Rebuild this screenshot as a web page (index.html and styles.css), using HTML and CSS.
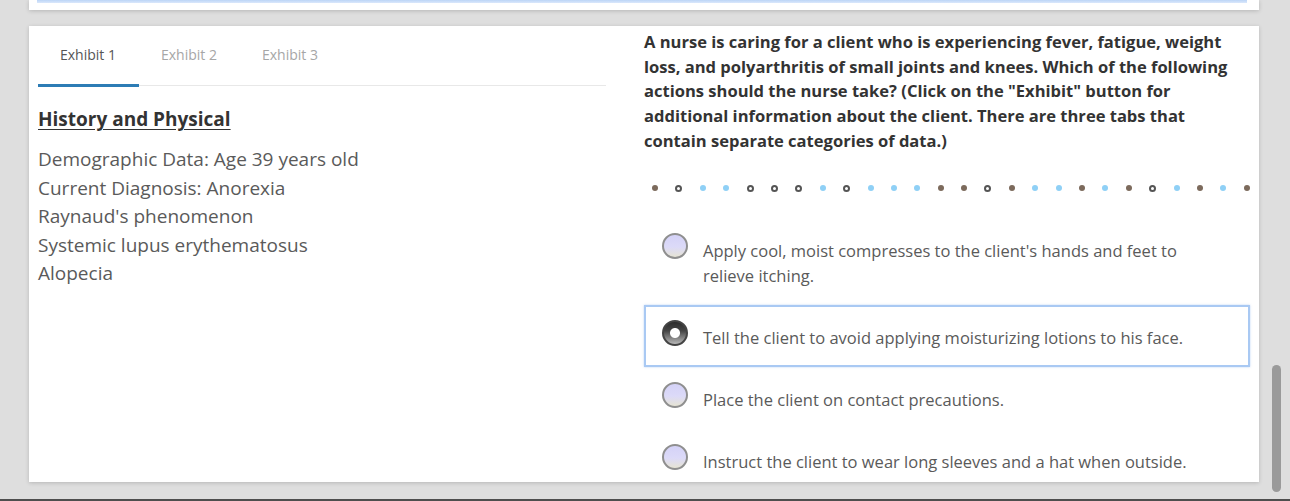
FILE: index.html
```html
<!DOCTYPE html>
<html lang="en">
<head>
<meta charset="utf-8">
<title>Exhibit question</title>
<link rel="stylesheet" href="styles.css">
</head>
<body>
<div class="page">
  <div class="top-card"><div class="top-bar"></div></div>
  <main class="card">
    <section class="exhibit">
      <nav class="tabs">
        <span class="tab active">Exhibit 1</span>
        <span class="tab">Exhibit 2</span>
        <span class="tab">Exhibit 3</span>
      </nav>
      <h2 class="ex-title">History and Physical</h2>
      <div class="ex-body">
        <div>Demographic Data: Age 39 years old</div>
        <div>Current Diagnosis: Anorexia</div>
        <div>Raynaud's phenomenon</div>
        <div>Systemic lupus erythematosus</div>
        <div>Alopecia</div>
      </div>
    </section>
    <section class="question">
      <p class="stem">A nurse is caring for a client who is experiencing fever, fatigue, weight loss, and polyarthritis of small joints and knees. Which of the following actions should the nurse take? (Click on the "Exhibit" button for additional information about the client. There are three tabs that contain separate categories of data.)</p>
      <div class="dots">
        <span class="dot b"></span><span class="dot r"></span><span class="dot l"></span><span class="dot l"></span><span class="dot r"></span><span class="dot r"></span><span class="dot r"></span><span class="dot l"></span><span class="dot r"></span><span class="dot l"></span><span class="dot l"></span><span class="dot l"></span><span class="dot b"></span><span class="dot b"></span><span class="dot r"></span><span class="dot b"></span><span class="dot l"></span><span class="dot l"></span><span class="dot b"></span><span class="dot l"></span><span class="dot b"></span><span class="dot r"></span><span class="dot l"></span><span class="dot b"></span><span class="dot l"></span><span class="dot b"></span>
      </div>
      <div class="options">
        <div class="option"><span class="radio"></span><span class="opt-text">Apply cool, moist compresses to the client's hands and feet to relieve itching.</span></div>
        <div class="option selected"><span class="radio on"></span><span class="opt-text">Tell the client to avoid applying moisturizing lotions to his face.</span></div>
        <div class="option"><span class="radio"></span><span class="opt-text">Place the client on contact precautions.</span></div>
        <div class="option"><span class="radio"></span><span class="opt-text">Instruct the client to wear long sleeves and a hat when outside.</span></div>
      </div>
    </section>
  </main>
  <div class="bottom-line"></div>
  <div class="scroll-thumb"></div>
</div>
</body>
</html>
```
FILE: styles.css
```css
* { box-sizing: border-box; }
html, body { margin: 0; padding: 0; }
body {
  background: #dedede;
  font-family: "Open Sans", "Noto Sans", sans-serif;
  overflow: hidden;
}
.page {
  position: relative;
  height: 501px;
  display: flex;
  flex-direction: column;
}
.top-card {
  margin-left: 29px;
  width: 1230px;
  height: 10px;
  background: #fff;
  padding: 0 12px 0 8px;
  box-shadow: 0 1px 4px rgba(0,0,0,0.18);
}
.top-bar {
  height: 3px;
  background: linear-gradient(#bcd5f7, #dbe8fb);
}
.card {
  margin: 16px 0 0 29px;
  width: 1230px;
  height: 456px;
  background: #fff;
  box-shadow: 0 1px 4px rgba(0,0,0,0.18);
  padding: 0 9px;
  display: grid;
  grid-template-columns: 568px 606px;
  column-gap: 38px;
  overflow: hidden;
}
.tabs {
  display: flex;
  border-bottom: 1px solid #e8e8e8;
}
.tab {
  width: 101px;
  padding: 20px 0 20px 22px;
  line-height: 18px;
  font-size: 14px;
  color: #a6a6a6;
  border-bottom: 3px solid transparent;
  margin-bottom: -2px;
}
.tab.active {
  color: #555;
  border-bottom-color: #2d7cb5;
}
.ex-title {
  margin: 19px 0 0;
  font-size: 19px;
  line-height: 28px;
  font-weight: 700;
  color: #333;
  text-decoration: underline;
  text-underline-offset: 3px;
}
.ex-body {
  margin-top: 12px;
  font-size: 19px;
  line-height: 28.5px;
  color: #5a5a5a;
}
.question {
  padding-top: 4px;
}
.stem {
  margin: 0;
  width: 600px;
  font-size: 16.55px;
  line-height: 24.7px;
  font-weight: 700;
  color: #333;
}
.dots {
  margin-top: 31px;
  padding-left: 8px;
  height: 7px;
  display: flex;
  justify-content: space-between;
  align-items: center;
}
.dot {
  width: 6px;
  height: 6px;
  border-radius: 50%;
}
.dot.b { background: #7c6a5c; }
.dot.l { background: #8fd0f6; }
.dot.r {
  width: 7px;
  height: 7px;
  border: 2px solid #555;
  background: #fff;
}
.options {
  margin-top: 26px;
}
.option {
  display: flex;
  gap: 15px;
  align-items: flex-start;
  padding: 14px 40px 15px 16px;
  border: 2px solid transparent;
}
.option.selected {
  border-color: #a9c9f3;
  box-shadow: 0 0 2px rgba(120,170,235,0.5);
}
.radio {
  flex-shrink: 0;
  width: 26px;
  height: 26px;
  margin-top: -1px;
  border-radius: 50%;
  border: 2px solid #8f8f8f;
  background: linear-gradient(#d4d2f7 0%, #dcdaf8 55%, #e6e4d4 100%);
}
.radio.on {
  border-color: #444;
  background: radial-gradient(circle, #fff 0 4.5px, transparent 5.5px),
              linear-gradient(#2c2c2c 0%, #454545 40%, #b8b8b8 100%);
}
.opt-text {
  margin-top: 4px;
  font-size: 16.5px;
  line-height: 25px;
  color: #5a5a5a;
}
.bottom-line {
  margin-top: auto;
  height: 2px;
  background: #4e4e4e;
}
.scroll-thumb {
  position: absolute;
  left: 1272px;
  top: 365px;
  width: 9px;
  height: 127px;
  border-radius: 5px;
  background: #9a9a9a;
}
```
